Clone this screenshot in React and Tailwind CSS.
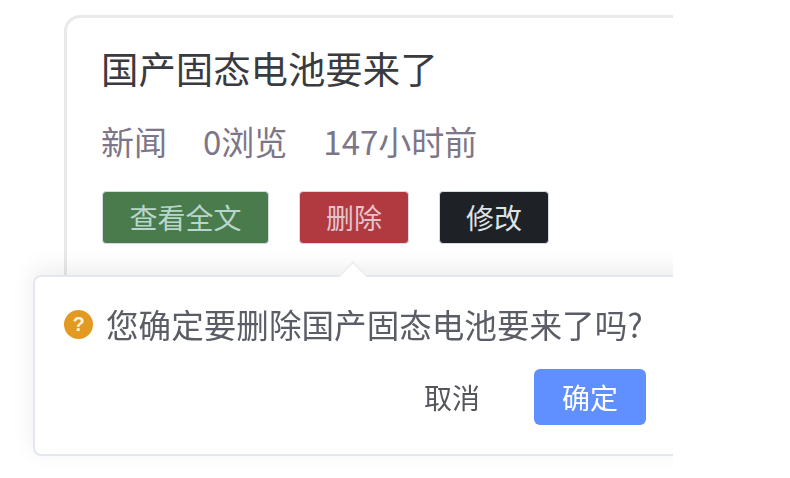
const Btn = ({ children, className }) => (
  <button className={`h-[53px] rounded-[4px] border border-[#d5dbe6] pb-[2px] text-[28px] leading-none ${className}`}>
    {children}
  </button>
);

const App = () => {
  return (
    <div className="relative h-[478px] w-[790px] overflow-hidden bg-white font-['Noto_Sans_CJK_SC',sans-serif]">
      <div className="relative h-[478px] w-[673px] overflow-hidden pl-[64px] pt-[15px] blur-[0.5px]">
        {/* card */}
        <div className="h-[400px] w-[700px] rounded-[16px] border-[3px] border-[#e9e9e9] bg-white pl-[35px] pt-[23px]">
          <h3 className="-ml-[1px] text-[37.4px] font-normal leading-[54px] text-[#3a3b40]">国产固态电池要来了</h3>
          <div className="-ml-[1px] mt-[23px] flex gap-[36px] text-[33px] leading-[46px] text-[#7d7688]">
            <span>新闻</span>
            <span>0浏览</span>
            <span>147小时前</span>
          </div>
          <div className="mt-[27px] flex gap-[30px]">
            <Btn className="w-[167px] bg-[#4a7b4c] text-[#b9d6cd]">查看全文</Btn>
            <Btn className="w-[110px] bg-[#b03a40] text-[#e3c4cc]">删除</Btn>
            <Btn className="w-[110px] bg-[#1e2125] text-[#dfe3e8]">修改</Btn>
          </div>
        </div>

        {/* popconfirm */}
        <div className="absolute left-[33px] top-[275px] h-[181px] w-[680px] rounded-[8px] border-2 border-[#e4e7ed] bg-white shadow-[0_-6px_24px_rgba(0,0,0,0.08)]">
          <div className="absolute -top-[12px] left-[308px] h-[20px] w-[20px] rotate-45 border-l-2 border-t-2 border-[#eceef2] bg-white" />
          <div className="relative flex items-center pl-[29px] pt-[23px]">
            <span className="flex h-[29px] w-[29px] items-center justify-center rounded-full bg-[#e39a22] font-['Liberation_Sans',sans-serif] text-[20px] font-bold leading-none text-[#fff5e0]">?</span>
            <span className="ml-[13px] whitespace-nowrap text-[32.6px] leading-[48px] text-[#5b5d66]">您确定要删除国产固态电池要来了吗?</span>
          </div>
          <div className="relative mt-[21px] flex w-[611px] items-center justify-end">
            <span className="text-[28px] leading-none text-[#55565c]">取消</span>
            <button className="ml-[54px] h-[56px] w-[112px] rounded-[6px] bg-[#6090ff] text-[28px] leading-none text-white">确定</button>
          </div>
        </div>
      </div>
    </div>
  );
};

export default App;
